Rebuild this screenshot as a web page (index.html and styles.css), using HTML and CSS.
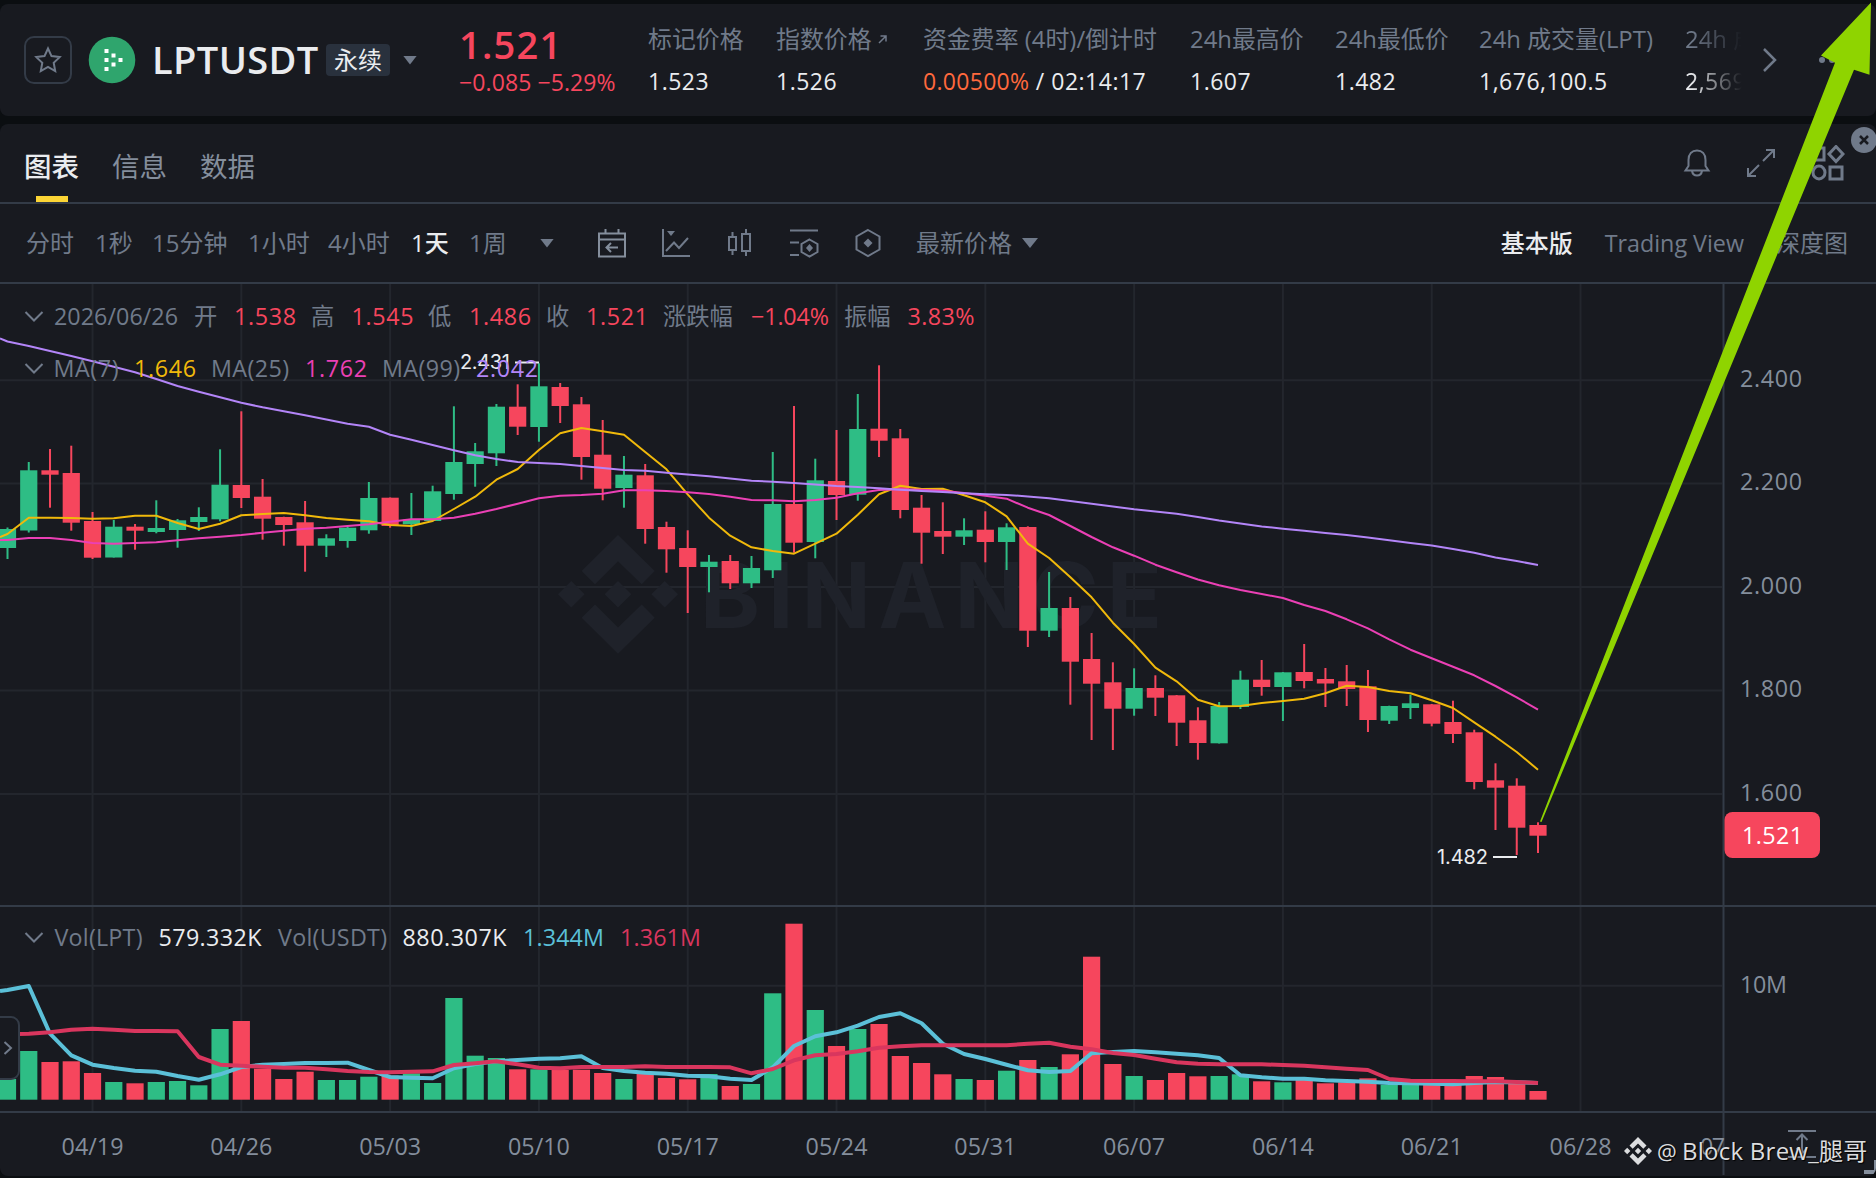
FILE: index.html
```
<!DOCTYPE html>
<html lang="zh-CN">

<head>
    <meta charset="UTF-8">
    <meta name="viewport" content="width=device-width, initial-scale=1.0">
    <title>LPTUSDT 永续</title>
    <link rel="stylesheet" href="styles.css">
</head>

<body>
    <header class="ticker">
        <button class="fav">
            <svg width="28" height="28" viewBox="0 0 28 28"><path d="M14 2.5l3.5 7.6 8.2 1-6 5.7 1.5 8.2L14 21l-7.200 4 1.500-8.200-6-5.700 8.200-1z" /></svg>
        </button>
        <svg class="coin" width="48" height="48" viewBox="0 0 48 48">
            <circle cx="24" cy="24" r="23.3" />
            <path d="M16.5 13h4v4h-4zM16.5 22h4v4h-4zM16.5 31h4v4h-4zM23.5 17.5h4v4h-4zM23.5 26.5h4v4h-4zM30.5 22h4v4h-4z" />
        </svg>
        <h1 class="symbol">LPTUSDT</h1>
        <span class="tag">永续</span>
        <i class="caret"></i>
        <div class="last">
            <div class="last-price">1.521</div>
            <div class="last-change">−0.085 −5.29%</div>
        </div>
        <div class="stats">
            <div class="stat"><span>标记价格</span><b>1.523</b></div>
            <div class="stat"><span>指数价格 <svg width="9" height="9" viewBox="0 0 9 9"><path d="M1 8l7-7M2.5 1H8v5.5" /></svg></span><b>1.526</b></div>
            <div class="stat"><span>资金费率 (4时)/倒计时</span><b><em>0.00500%</em> / 02:14:17</b></div>
            <div class="stat"><span>24h最高价</span><b>1.607</b></div>
            <div class="stat"><span>24h最低价</span><b>1.482</b></div>
            <div class="stat"><span>24h 成交量(LPT)</span><b>1,676,100.5</b></div>
            <div class="stat stat-cut"><span>24h 成</span><b>2,569</b></div>
        </div>
        <svg class="next" width="16" height="26" viewBox="0 0 16 26"><path d="M2 2l11 11L2 24" /></svg>
        <svg class="more" width="30" height="8" viewBox="0 0 30 8"><circle cx="4" cy="4" r="3" /><circle cx="14" cy="4" r="3" /><circle cx="24" cy="4" r="3" /></svg>
    </header>

    <main class="panel">
        <nav class="tabs">
            <a class="tab active">图表</a>
            <a class="tab">信息</a>
            <a class="tab">数据</a>
            <div class="tab-icons">
                <svg width="28" height="30" viewBox="0 0 28 30"><path d="M5.5 18V12C5.5 6 9 2.500 14 2.500s8.500 3.500 8.500 9.500v6l3 4.500h-23zM9 23c.5 3 2.500 4.500 5 4.500s4.500-1.500 5-4.500" /></svg>
                <svg width="30" height="30" viewBox="0 0 30 30"><path d="M17 13L27.5 2.500M20 2h8v8M13 17L2.500 27.500M2 20v8h8" /></svg>
                <svg class="bold" width="34" height="36" viewBox="0 0 34 36"><path d="M2 3h11v12H2zM19 22h12v12H19zM25 1.500l7 7.500-7 7.500L18 9z" /><ellipse cx="8" cy="27.500" rx="6" ry="6.500" /></svg>
            </div>
        </nav>

        <div class="toolbar">
            <div class="intervals">
                <a>分时</a>
                <a>1秒</a>
                <a>15分钟</a>
                <a>1小时</a>
                <a>4小时</a>
                <a class="active">1天</a>
                <a>1周</a>
                <i class="caret"></i>
                <svg class="lit" width="30" height="30" viewBox="0 0 30 30"><path d="M2 5.500h26v23H2zM2 11.500h26M8.500 1v5M21.500 1v5M21 19.500H10M14 15l-4.500 4.500L14 24" /></svg>
                <svg width="30" height="30" viewBox="0 0 30 30"><path d="M2 1v27h27M5 23l8-8.500 5 5.500 9-10" /><path class="solid" d="M6 3h8l-4 5z" /></svg>
                <svg width="28" height="30" viewBox="0 0 28 30"><path d="M3 9h7v13H3zM6.500 4v5M6.500 22v5M16 6h8v17h-8zM20 1v5M20 23v5" /></svg>
                <svg width="30" height="30" viewBox="0 0 30 30"><path d="M1 2.500h28M1 14.500h9M1 27h9M20.500 11.500l8 4.500v8l-8 4.500-8-4.500v-8z" /><path class="solid" d="M20.500 16l3.500 4-3.500 4-3.500-4z" /></svg>
                <svg width="28" height="30" viewBox="0 0 28 30"><path d="M14 2l11.500 6.500v13L14 28 2.500 21.500v-13z" /><path class="solid" d="M14 10.500l4.500 4.500-4.500 4.500L9.500 15z" /></svg>
                <a>最新价格</a>
                <i class="caret wide"></i>
            </div>
            <div class="views">
                <a class="active">基本版</a>
                <a class="latin">Trading View</a>
                <a>深度图</a>
            </div>
        </div>

        <svg class="chart" viewBox="0 284 1876 892">
            <g id="grid" class="grid"></g>
            <g class="watermark">
                <path d="M618 535l36.700 36-13 13.300-23.700-23-23 23-13.300-13.300zM618 653.700l36.700-36-13-13.300-23.700 23-23-23-13.300 13.300zM571.300 581l13.300 13.300-13.300 13.300-13.300-13.300zM618 581l13.300 13.300-13.300 13.300-13.300-13.300zM664.700 581l13.300 13.300-13.300 13.300-13.300-13.300z" />
                <text x="700" y="627.7" textLength="462">BINANCE</text>
            </g>
            <g id="candles"></g>
            <g id="volumes"></g>
            <g id="averages" class="averages"></g>

            <g class="rules">
                <path d="M0 906h1876M0 1112h1876M1723.500 284v891" />
            </g>

            <!-- high / low markers -->
            <g class="marker">
                <text x="460" y="369" textLength="50">2.431</text>
                <path d="M515 362.500h24M1493 857h24" />
                <text x="1437" y="864" textLength="51">1.482</text>
            </g>

            <g class="legend">
                <path d="M25.500 312l8.500 8.500 8.500-8.500M25.500 364l8.500 8.500 8.500-8.500M25.500 933l8.500 8.500 8.500-8.500" />
                <text x="54" y="324.500" textLength="124">2026/06/26</text>
                <text x="194" y="324.500">开</text>
                <text class="down" x="234" y="324.500" textLength="62">1.538</text>
                <text x="311" y="324.500">高</text>
                <text class="down" x="351.500" y="324.500" textLength="62">1.545</text>
                <text x="428" y="324.500">低</text>
                <text class="down" x="469" y="324.500" textLength="62">1.486</text>
                <text x="546" y="324.500">收</text>
                <text class="down" x="586" y="324.500" textLength="62">1.521</text>
                <text x="663" y="324.500">涨跌幅</text>
                <text class="down" x="751" y="324.500" textLength="78">−1.04%</text>
                <text x="844" y="324.500">振幅</text>
                <text class="down" x="907.500" y="324.500" textLength="67">3.83%</text>

                <text x="53.500" y="376.500" textLength="65">MA(7)</text>
                <text class="ma7" x="134" y="376.500" textLength="62">1.646</text>
                <text x="211" y="376.500" textLength="78">MA(25)</text>
                <text class="ma25" x="305" y="376.500" textLength="62">1.762</text>
                <text x="382" y="376.500" textLength="78">MA(99)</text>
                <text class="ma99" x="476" y="376.500" textLength="62">2.042</text>

                <text x="54.500" y="945.500" textLength="88">Vol(LPT)</text>
                <text class="light" x="158.500" y="945.500" textLength="103">579.332K</text>
                <text x="278" y="945.500" textLength="109">Vol(USDT)</text>
                <text class="light" x="402.500" y="945.500" textLength="104">880.307K</text>
                <text class="vol-a" x="523" y="945.500" textLength="81">1.344M</text>
                <text class="vol-b" x="620" y="945.500" textLength="81">1.361M</text>
            </g>

            <g class="axis">
                <text x="1740" y="386.500" textLength="62">2.400</text>
                <text x="1740" y="490" textLength="62">2.200</text>
                <text x="1740" y="593.500" textLength="62">2.000</text>
                <text x="1740" y="697" textLength="62">1.800</text>
                <text x="1740" y="800.500" textLength="62">1.600</text>
                <text x="1740" y="992.500" textLength="47">10M</text>
                <g id="dates" class="dates"></g>
                <text x="1700" y="1154.500" textLength="25">07</text>
                <path d="M1788 1131h28M1788 1157h28M1802 1135v18M1796.500 1140l5.500-5.500 5.500 5.500M1796.500 1148l5.500 5.500 5.500-5.500" />
            </g>

            <g class="price-tag">
                <rect x="1724.500" y="812" width="95.500" height="46" rx="8" />
                <text x="1742" y="843.500" textLength="61">1.521</text>
            </g>

            <g class="handle">
                <rect x="-10" y="1017" width="29" height="62" rx="8" />
                <path d="M4.500 1042l6.500 6-6.500 6" />
            </g>
            <path class="corner" d="M1876 1160v14h-12v-4h10v-10z" />
        </svg>
    </main>

    <svg class="arrow" width="1876" height="1178" viewBox="0 0 1876 1178">
        <path d="M1871 2.500l-1.500 72.300-15.500-5.100L1541.500 822l-1.500-.5L1835 62.700l-14-7.200z" />
    </svg>

    <button class="close">
        <svg width="10" height="10" viewBox="0 0 10 10"><path d="M1 1l8 8M9 1L1 9" /></svg>
    </button>

    <div class="credit">
        <svg width="28" height="28" viewBox="0 0 28 28"><path d="M14 0l8.500 8.500-3.200 3.200L14 6.400l-5.300 5.300-3.200-3.200zM14 28l8.500-8.500-3.200-3.200-5.300 5.300-5.300-5.300-3.200 3.200zM3.200 10.800L6.400 14l-3.200 3.200L0 14zM14 10.800l3.200 3.200-3.200 3.200-3.200-3.200zM24.800 10.800L28 14l-3.200 3.200-3.200-3.200z" /></svg>
        <span class="at">@</span>
        <span>Block Brew_腿哥</span>
    </div>

    <script src="script.js"></script>
</body>

</html>
```
FILE: styles.css
```
* {
    margin: 0;
    padding: 0;
    box-sizing: border-box;
}

body {
    width: 1876px;
    height: 1178px;
    overflow: hidden;
    padding: 4px 0 2px;
    display: flex;
    flex-direction: column;
    gap: 8px;
    position: relative;
    background: #0b0e11;
    color: #707a8a;
    font-family: "Open Sans", "Noto Sans CJK SC", sans-serif;
    font-size: 24px;
    line-height: 32px;
}

button {
    background: none;
    border: none;
}

svg {
    display: block;
    fill: none;
    stroke: #707a8a;
    stroke-width: 2;
}

.ticker {
    height: 112px;
    flex: none;
    display: flex;
    align-items: center;
    padding-left: 24px;
    background: #181a20;
    border-radius: 8px;
}

.fav {
    width: 48px;
    height: 48px;
    display: flex;
    justify-content: center;
    align-items: center;
    border: 2px solid #333b47;
    border-radius: 10px;
}

.coin {
    margin-left: 16px;
    stroke: none;
}

.coin circle {
    fill: #2fa56d;
}

.coin path {
    fill: #fff;
}

.symbol {
    width: 174px;
    margin-left: 16px;
    margin-bottom: 2px;
    color: #eaecef;
    font-size: 38px;
    font-weight: 600;
    line-height: 48px;
    letter-spacing: 0.4px;
    white-space: nowrap;
}

.tag {
    width: 64px;
    height: 32px;
    line-height: 31px;
    text-align: center;
    border-radius: 4px;
    background: #29313d;
    color: #eaecef;
}

.caret {
    width: 14px;
    height: 9px;
    background: #707a8a;
    clip-path: polygon(0 0, 100% 0, 50% 100%);
}

.ticker .caret {
    margin-left: 13px;
}

.last {
    width: 189px;
    margin-left: 42px;
    color: #f6465d;
    white-space: nowrap;
}

.last-price {
    height: 44px;
    font-size: 38px;
    font-weight: 600;
    line-height: 48px;
    letter-spacing: 1.2px;
}

.last-change {
    height: 36px;
    line-height: 36px;
    font-size: 23px;
    letter-spacing: 0.1px;
}

.stats {
    width: 1096px;
    display: grid;
    grid-template-columns: 128px 147px 267px 145px 144px 206px 60px;
    overflow: hidden;
    white-space: nowrap;
}

.stat {
    display: flex;
    flex-direction: column;
    gap: 10px;
}

.stat span {
    font-size: 23.9px;
}

.stat b {
    font-weight: 400;
    color: #eaecef;
    font-size: 23px;
    letter-spacing: 0.5px;
}

.stat em {
    font-style: normal;
    color: #ff693d;
    letter-spacing: 0.3px;
}

.stat svg {
    display: inline-block;
    vertical-align: 4px;
    stroke-width: 1.5;
}

.stat-cut {
    overflow: hidden;
    -webkit-mask-image: linear-gradient(90deg, #000 10%, transparent 95%);
    mask-image: linear-gradient(90deg, #000 10%, transparent 95%);
}

.next {
    margin-left: 18px;
    stroke-width: 2.5;
}

.more {
    margin-left: 40px;
    fill: #707a8a;
    stroke: none;
}

.panel {
    height: 1052px;
    background: #181a20;
    border-radius: 8px;
    overflow: hidden;
}

.tabs {
    height: 80px;
    display: flex;
    padding-left: 24px;
    border-bottom: 2px solid #333b47;
}

.tab {
    width: 56px;
    margin-right: 32px;
    font-size: 27.5px;
    line-height: 85px;
    color: #848e9c;
}

.tab.active {
    color: #eaecef;
    font-weight: 500;
    background: linear-gradient(#fcd535, #fcd535) 12px 100% / 32px 6px no-repeat;
}

.tab-icons {
    margin-left: auto;
    padding-right: 31px;
    display: flex;
    align-items: center;
    gap: 35px;
}

.tab-icons .bold {
    stroke-width: 3;
}

.toolbar {
    height: 80px;
    display: flex;
    justify-content: space-between;
    align-items: center;
    padding: 0 28px 0 26px;
    border-bottom: 2px solid #333b47;
    white-space: nowrap;
}

.intervals {
    display: grid;
    align-items: center;
    grid-template-columns: 69px 57px 96px 80px 83px 58px 71px 57px 64px 65px 63px 65px 62px 106px 16px;
}

.caret.wide {
    width: 16px;
    height: 10px;
}

.toolbar .active {
    color: #eaecef;
    font-weight: 500;
}

.intervals .lit {
    stroke: #848e9c;
}

.intervals .solid {
    fill: #707a8a;
    stroke: none;
}

.views {
    display: flex;
    gap: 32px;
}

.views .latin {
    font-size: 23.3px;
}

.chart {
    width: 1876px;
    height: 892px;
}

.chart text {
    stroke: none;
    fill: #707a8a;
    font-size: 23.3px;
}

.grid {
    stroke: #23262d;
}

.rules {
    stroke: #333b47;
}

.watermark path {
    fill: #1f222a;
    stroke: none;
}

.chart .watermark text {
    fill: #1f222a;
    font-family: Inter, sans-serif;
    font-size: 91px;
    font-weight: 700;
}

.up {
    fill: #2ebd85;
    stroke: none;
}

.fall {
    fill: #f6465d;
    stroke: none;
}

.averages {
    stroke-linejoin: round;
}

.line-ma7 {
    stroke: #f0b90b;
}

.line-ma25 {
    stroke: #eb40b5;
}

.line-ma99 {
    stroke: #b385f8;
}

.line-vol-a {
    stroke: #5bc0d8;
    stroke-width: 4;
}

.line-vol-b {
    stroke: #d9365e;
    stroke-width: 4;
}

.marker {
    stroke: #eaecef;
}

.chart .marker text {
    fill: #eaecef;
    font-family: Inter, sans-serif;
    font-size: 20px;
}

.legend .down {
    fill: #f6465d;
}

.legend .ma7 {
    fill: #f0b90b;
}

.legend .ma25 {
    fill: #eb40b5;
}

.legend .ma99 {
    fill: #b385f8;
}

.legend .light {
    fill: #eaecef;
}

.legend .vol-a {
    fill: #5bc0d8;
}

.legend .vol-b {
    fill: #d9365e;
}

.axis text {
    fill: #848e9c;
}

.dates text {
    text-anchor: middle;
}

.price-tag rect {
    fill: #f6465d;
    stroke: none;
}

.chart .price-tag text {
    fill: #fff;
}

.handle rect {
    fill: #181a20;
    stroke: #333b47;
}

.corner {
    fill: #848e9c;
    stroke: none;
}

.arrow {
    position: absolute;
    left: 0;
    top: 0;
    stroke: none;
    fill: #8fd400;
}

.close {
    position: absolute;
    left: 1851px;
    top: 127px;
    width: 26px;
    height: 26px;
    display: flex;
    justify-content: center;
    align-items: center;
    border-radius: 50%;
    background: #707a8a;
}

.close svg {
    stroke: #181a20;
    stroke-width: 2.5;
}

.credit {
    position: absolute;
    left: 1624px;
    top: 1135px;
    display: flex;
    align-items: center;
    gap: 5px;
    color: #dcdddf;
    text-shadow: 1px 1px 1px #000;
    white-space: nowrap;
    letter-spacing: 0.25px;
}

.credit svg {
    fill: #dcdddf;
    stroke: none;
}

.credit .at {
    font-size: 22px;
}
```
FILE: script.js
```
const NS = 'http://www.w3.org/2000/svg';
const STEP = 21.257;
const FIRST = 7.5;
const BASE = 1099.7;

// direction, high, body top, body bottom, low, volume top
const candles = [
    [1, 527.5, 529, 548, 559, 1079],
    [1, 462, 470.3, 530.5, 532.5, 1051],
    [0, 449, 470.3, 474.7, 507.7, 1062],
    [0, 445.7, 473, 522.7, 530.7, 1061.3],
    [0, 512, 521, 557.7, 559, 1073],
    [1, 520, 526.7, 557.5, 557.5, 1082],
    [0, 524, 526.7, 530.7, 549.7, 1083.3],
    [1, 500.3, 528, 532, 533.3, 1082],
    [1, 519, 520.3, 530, 547.7, 1081],
    [1, 507.3, 517, 522, 531, 1085.3],
    [1, 449.3, 484.7, 519.3, 521.3, 1029],
    [0, 411.3, 485, 498, 508, 1021],
    [0, 479, 496.7, 518.7, 539.7, 1068.7],
    [0, 516.7, 517, 525, 545.7, 1079],
    [0, 501, 522.3, 545.7, 571.7, 1071.7],
    [1, 534.3, 538.3, 545.7, 557, 1080],
    [1, 527, 527.7, 541, 547.7, 1080],
    [1, 482, 498, 530.3, 533.7, 1076.7],
    [0, 497.5, 497.7, 526, 527.7, 1075.7],
    [1, 493, 519.7, 524.3, 535, 1073.3],
    [1, 485.7, 491.3, 521, 521.5, 1083],
    [1, 406.3, 462, 494, 499.7, 998],
    [1, 443, 451.3, 464, 486.7, 1055.7],
    [1, 404, 406.7, 453.3, 466, 1058],
    [0, 384.3, 406.7, 426.7, 435, 1069.3],
    [1, 363.3, 386.3, 427, 441.7, 1069.3],
    [0, 383, 387, 406, 423, 1070],
    [0, 397, 404.3, 457, 479.7, 1069.7],
    [0, 420, 454.7, 488.7, 500.3, 1073],
    [1, 456, 474.7, 488, 507.7, 1079],
    [0, 464, 475.3, 529, 543.7, 1072.7],
    [0, 521.7, 527, 549.3, 572.7, 1078],
    [0, 530.3, 548, 567, 613, 1079.3],
    [1, 555, 561.7, 567, 592.3, 1074],
    [0, 555, 561, 583.3, 589, 1086],
    [1, 556, 568, 583.3, 588, 1084],
    [1, 452, 504, 570.3, 578, 993.3],
    [0, 406, 504, 542.7, 552.7, 923.7],
    [1, 458.7, 480.3, 542, 558.3, 1010],
    [0, 430, 481, 495, 520, 1046],
    [1, 394, 429, 494.7, 500.7, 1029],
    [0, 365.3, 428.7, 440.7, 457, 1024],
    [0, 429, 438.3, 510, 518.3, 1056],
    [0, 495, 507.7, 532.7, 563.7, 1063],
    [0, 502.3, 531, 536.7, 554, 1074.3],
    [1, 518.3, 530.3, 536.7, 545, 1079],
    [0, 511.3, 529.7, 542, 562.3, 1080],
    [1, 523.3, 527.3, 542, 570, 1070.7],
    [0, 526.3, 527, 630.7, 647, 1060],
    [1, 572, 608, 630.7, 637, 1067],
    [0, 597, 608, 661.7, 704.7, 1054.3],
    [0, 633, 659, 683.7, 740, 956.7],
    [0, 662.3, 682.3, 708.7, 750, 1064],
    [1, 668.3, 688, 708.7, 715.7, 1076],
    [0, 675.3, 688, 697.7, 716, 1080],
    [0, 695, 695.3, 722.7, 746, 1073],
    [0, 707.3, 720.3, 743, 759.7, 1076.3],
    [1, 702, 706, 743.3, 743.5, 1076],
    [1, 670.7, 679.7, 707, 709, 1074.3],
    [0, 660, 679.7, 687, 695.7, 1081.3],
    [1, 672, 672.3, 687, 721, 1082.3],
    [0, 644, 672, 681, 688.3, 1080],
    [0, 668, 679, 683.5, 707, 1083.3],
    [0, 665, 681.3, 689, 706, 1082.3],
    [0, 670, 686.3, 720, 732, 1078.3],
    [1, 705.7, 706, 720.7, 724, 1084.7],
    [1, 694.7, 703.3, 708, 719, 1084.7],
    [0, 704, 704.3, 723.7, 726.3, 1084],
    [0, 700.7, 722, 734, 743, 1083.3],
    [0, 729.7, 732.3, 782, 789.3, 1076],
    [0, 763.3, 780.3, 787.7, 830, 1077],
    [0, 778.3, 785.7, 827.7, 855, 1084],
    [0, 822.3, 825, 835.7, 853, 1091]
];

const ma7 = [534, 517.7, 517.7, 518, 518.7, 518.3, 515.7, 515.7, 523, 529, 523.7, 515.3, 514, 513, 515.3, 518, 519.7, 521.3, 525, 526, 521, 509, 496.7, 479.7, 469, 450, 433.3, 428, 431.3, 434.7, 452, 469.3, 494.3, 517.7, 535.7, 547.3, 551, 553.7, 543.7, 533.7, 514.7, 494.3, 485.7, 489, 488.7, 495.3, 502.3, 516.3, 543.7, 558, 577.3, 597.3, 622.7, 644, 667.7, 681.3, 699.7, 706.3, 706, 703, 701, 698.7, 693.3, 685.7, 687, 691, 693.3, 700.3, 708, 722.3, 736.7, 752, 769.7];
const ma25 = [540, 538, 538, 540, 543, 543.7, 543, 542.3, 540.3, 538.3, 536.7, 535, 532.7, 530.7, 528.7, 527.7, 526, 524.3, 521.7, 519.3, 519.3, 517.7, 513.7, 509, 503.7, 498.3, 495.7, 495, 493.7, 490.3, 490.3, 491, 492.3, 494, 496.7, 500, 500.3, 501.3, 500, 497.7, 493.3, 490, 489.3, 489.7, 490.7, 493, 495.7, 498.7, 507.7, 515, 526, 537, 547.3, 555.7, 564.7, 572.3, 579.5, 585.3, 590, 594, 598, 605, 611, 619.3, 628.3, 639.3, 649.7, 658.3, 666.7, 675.3, 686, 697.3, 709.7];
const ma99 = [341.5, 346, 351, 356, 361.3, 366.8, 372.3, 379, 386, 391.7, 397.3, 402.7, 407.3, 411.3, 415.3, 419.5, 423.7, 426.7, 434.7, 439.8, 445, 450.3, 455.3, 459, 462, 463, 464, 466, 468, 470, 470.7, 472.7, 474.5, 476.3, 478.5, 480.7, 481.8, 483, 484.5, 486, 487, 488.3, 489.7, 490.9, 492.1, 493.3, 494.2, 495, 496.4, 498.3, 501, 503.7, 506.5, 509.3, 511.5, 513.7, 517, 520.5, 523.5, 526.5, 528.7, 530.8, 532.9, 535, 537.5, 540.3, 543, 545.5, 549, 552.8, 557.5, 561, 565];
const volA = [990, 986, 1033.7, 1055.3, 1064.7, 1068, 1070.7, 1071.7, 1076, 1079.7, 1074.3, 1067, 1064.7, 1064, 1063, 1063, 1062.7, 1070, 1077, 1077.7, 1078.3, 1068.3, 1064, 1061.3, 1060, 1058.7, 1058.3, 1056.3, 1068, 1071, 1072.7, 1073.7, 1075.7, 1076.3, 1078.7, 1080, 1067.3, 1046, 1036.3, 1032.3, 1025.7, 1017, 1013.3, 1023.3, 1043.7, 1054, 1059, 1064.7, 1070.3, 1072, 1071, 1053.3, 1052, 1051, 1052.3, 1053.7, 1055.3, 1058, 1075.3, 1077.3, 1078.7, 1078.7, 1080.3, 1081, 1081.7, 1083, 1083.3, 1083.7, 1084.3, 1083, 1082, 1082.3, 1083];
const volB = [1034.3, 1033.7, 1032.3, 1029.7, 1028.7, 1029.7, 1031, 1031, 1031.3, 1057, 1064.7, 1065.7, 1066.7, 1067.7, 1067.7, 1069.3, 1071, 1072, 1072.3, 1071.7, 1071.3, 1065, 1063.3, 1061.3, 1064.3, 1067.7, 1068.3, 1067, 1067, 1067, 1066.3, 1067, 1067, 1067, 1067.3, 1073.3, 1069, 1060.3, 1055.3, 1054, 1051.3, 1047.7, 1046.3, 1045.3, 1045.3, 1045.3, 1045.3, 1045.3, 1043.7, 1042.7, 1046.7, 1049.3, 1053, 1055, 1058.7, 1062.3, 1063.7, 1064.3, 1064.3, 1064.3, 1065, 1065.7, 1067.3, 1068.7, 1070, 1079, 1080.7, 1081, 1081, 1081.3, 1081.3, 1082, 1083];

const dates = ['04/19', '04/26', '05/03', '05/10', '05/17', '05/24', '05/31', '06/07', '06/14', '06/21', '06/28'];

function add(parent, tag, attrs, text) {
    let el = document.createElementNS(NS, tag);
    for (let key in attrs) el.setAttribute(key, attrs[key]);
    if (text) el.textContent = text;
    document.getElementById(parent).appendChild(el);
}

let xAt = (i) => FIRST + i * STEP;

function box(parent, cls, x, top, width, height) {
    add(parent, 'rect', { class: cls, x: x - width / 2, y: top, width: width, height: height });
}

function line(cls, values, start) {
    let points = '0,' + start + ' ' + values.map((y, i) => xAt(i).toFixed(1) + ',' + y).join(' ');
    add('averages', 'polyline', { class: cls, points: points });
}

[380.3, 483.6, 587, 690.5, 794, 985.8].forEach((y) => {
    add('grid', 'path', { d: 'M0 ' + y + 'H1722' });
});

dates.forEach((label, i) => {
    let x = xAt(4 + i * 7);
    add('grid', 'path', { d: 'M' + x + ' 284V1111' });
    add('dates', 'text', { x: x, y: 1154.5, textLength: 62 }, label);
});

candles.forEach(([up, high, top, bottom, low, vol], i) => {
    let cls = up ? 'up' : 'fall';
    box('candles', cls, xAt(i), high, 2, low - high);
    box('candles', cls, xAt(i), top, 17.2, bottom - top);
    box('volumes', cls, xAt(i), vol, 17.2, BASE - vol);
});

line('line-ma7', ma7, 537);
line('line-ma25', ma25, 540);
line('line-ma99', ma99, 338.5);
line('line-vol-a', volA, 991);
line('line-vol-b', volB, 1035);
```
